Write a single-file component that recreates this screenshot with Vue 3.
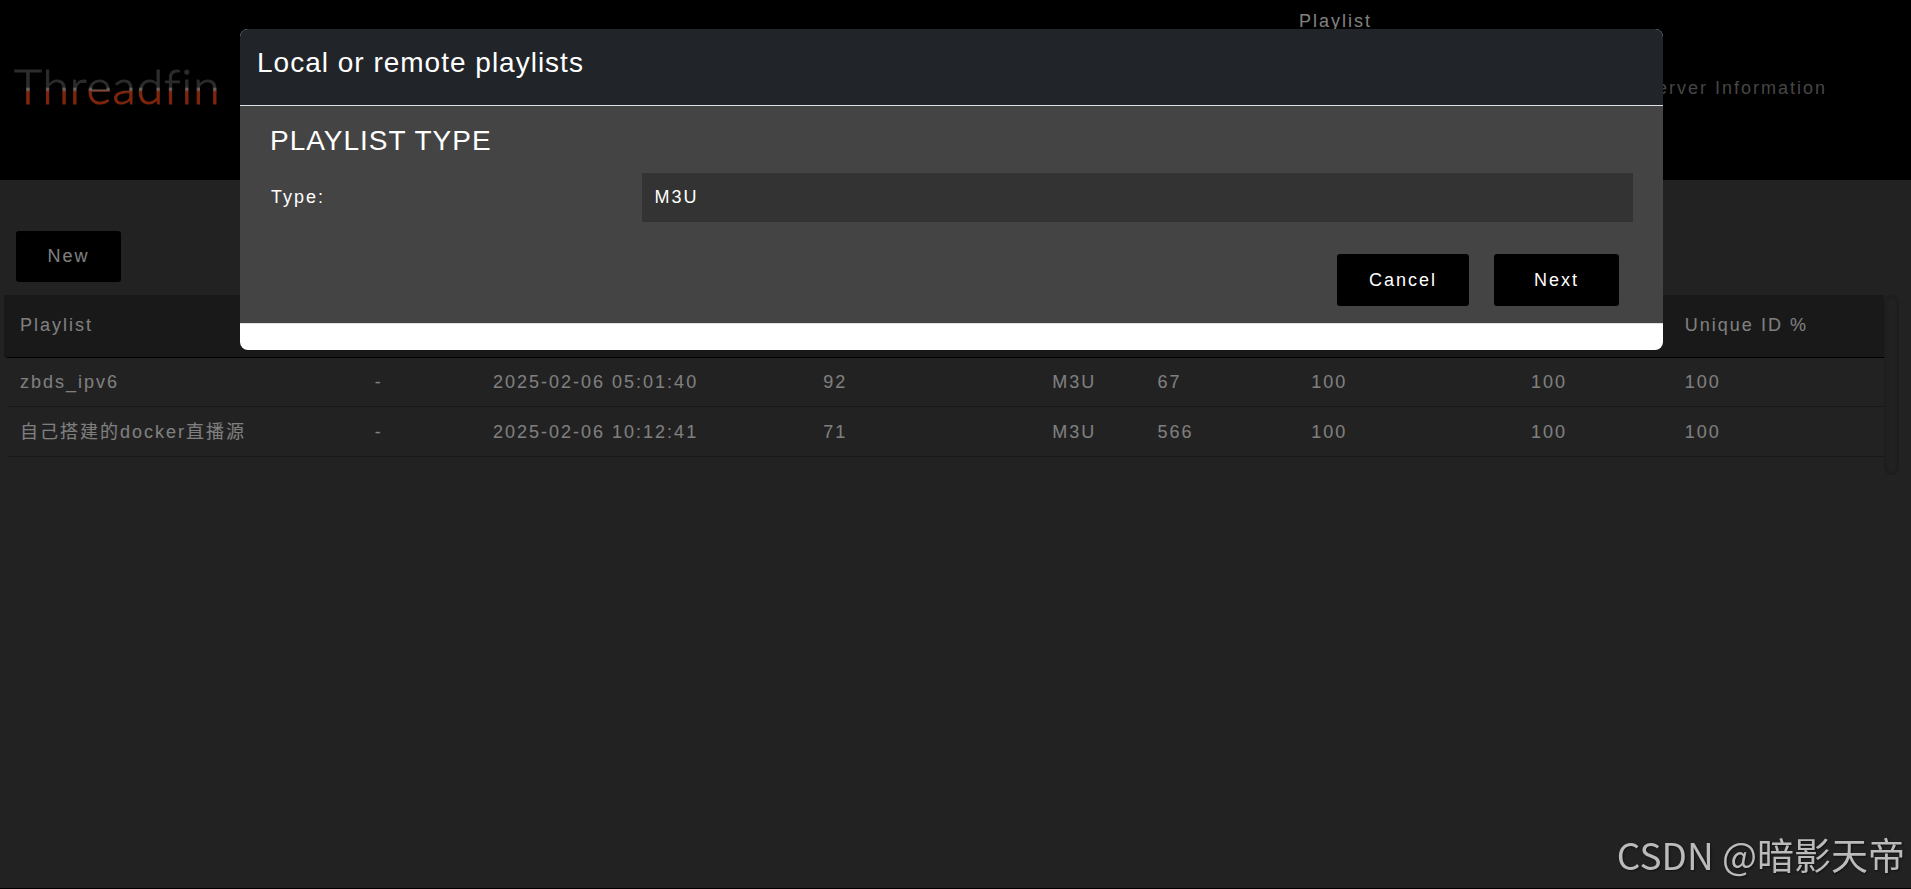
<script setup>
import { ref } from 'vue'

const playlistType = ref('M3U')

const columns = [
  { key: 'name', label: 'Playlist' },
  { key: 'tuner', label: 'Tuner' },
  { key: 'updated', label: 'Last Update' },
  { key: 'availability', label: 'Availability %' },
  { key: 'type', label: 'Type' },
  { key: 'streams', label: 'Streams' },
  { key: 'group', label: 'Group Title %' },
  { key: 'tvg', label: 'tvg-id %' },
  { key: 'unique', label: 'Unique ID %' },
]

const playlists = [
  { name: 'zbds_ipv6', tuner: '-', updated: '2025-02-06 05:01:40', availability: 92, type: 'M3U', streams: 67, group: 100, tvg: 100, unique: 100 },
  { name: '自己搭建的docker直播源', tuner: '-', updated: '2025-02-06 10:12:41', availability: 71, type: 'M3U', streams: 566, group: 100, tvg: 100, unique: 100 },
]
</script>

<template>
  <div class="page">
    <header class="topbar">
      <div class="logo">Threadfin</div>
      <nav class="nav">
        <a class="nav-link active" href="#playlist">Playlist</a>
        <a class="nav-link info" href="#server">Server Information</a>
      </nav>
    </header>

    <main class="content">
      <div class="toolbar">
        <button class="btn new" type="button">New</button>
      </div>
      <div class="table-area">
        <table class="list">
          <colgroup>
            <col v-for="c in columns" :key="c.key" :class="'col-' + c.key" />
          </colgroup>
          <thead>
            <tr>
              <th v-for="c in columns" :key="c.key" scope="col">{{ c.label }}</th>
            </tr>
          </thead>
          <tbody>
            <tr v-for="p in playlists" :key="p.name">
              <td v-for="c in columns" :key="c.key">{{ p[c.key] }}</td>
            </tr>
          </tbody>
        </table>
        <div class="track"></div>
      </div>
    </main>

    <div class="backdrop">
      <section class="modal" role="dialog" aria-labelledby="modal-title">
        <div class="modal-header">
          <h3 id="modal-title">Local or remote playlists</h3>
        </div>
        <form class="modal-body" @submit.prevent>
          <h4>Playlist type</h4>
          <div class="field">
            <label for="type">Type:</label>
            <select id="type" v-model="playlistType">
              <option value="M3U">M3U</option>
            </select>
          </div>
          <div class="actions">
            <button class="btn cancel" type="button">Cancel</button>
            <button class="btn next" type="submit">Next</button>
          </div>
        </form>
        <div class="modal-footer"></div>
      </section>
    </div>

    <div class="watermark">CSDN @暗影天帝</div>
  </div>
</template>

<style>
body {
  background: #222;
}
</style>

<style scoped>
.page {
  box-sizing: border-box;
  min-height: 100vh;
  border-bottom: 1px solid #000;
  background: #444;
  color: #fff;
  font-family: "Liberation Sans", Arial, "Noto Sans CJK SC", sans-serif;
  font-size: 18px;
  line-height: 26px;
  letter-spacing: 2px;
}

.topbar {
  display: flex;
  justify-content: space-between;
  box-sizing: border-box;
  height: 180px;
  padding: 8px 84px 0 14px;
  background: #000;
}

.logo {
  align-self: center;
  padding-bottom: 16px;
  font-family: Lato, sans-serif;
  font-size: 48px;
  font-weight: 300;
  line-height: 60px;
  letter-spacing: 1px;
  color: transparent;
  -webkit-text-stroke: 1px transparent;
  background: linear-gradient(#585858 31px, #e0e0e0 33px, #ff4a18 36px);
  background-clip: text;
  -webkit-background-clip: text;
}

.nav {
  display: flex;
  align-items: flex-start;
  justify-content: space-between;
  width: 528px;
}

.nav-link {
  color: #fff;
  text-decoration: none;
}

.nav-link.info {
  padding-top: 67px;
  color: #8c8c8c;
}

.toolbar {
  padding: 51px 16px 13px;
}

.btn {
  box-sizing: border-box;
  height: 52px;
  padding: 0;
  border: 0;
  border-radius: 3px;
  background: #000;
  color: #fff;
  font: inherit;
  letter-spacing: inherit;
}

.btn.new {
  display: block;
  width: 105px;
  height: 51px;
  padding-bottom: 2px;
}

.table-area {
  display: flex;
  padding: 0 12px 0 7px;
}

.list {
  flex: 1;
  align-self: flex-start;
  table-layout: fixed;
  border-collapse: separate;
  border-spacing: 0;
}

.col-name { width: 18.9%; }
.col-tuner { width: 6.3%; }
.col-updated { width: 17.6%; }
.col-availability { width: 12.2%; }
.col-type { width: 5.6%; }
.col-streams { width: 8.2%; }
.col-group { width: 11.7%; }
.col-tvg { width: 8.2%; }
.col-unique { width: 11.3%; }

th,
td {
  box-sizing: border-box;
  padding: 0 13px;
  text-align: left;
  font-weight: 400;
  white-space: nowrap;
}

th {
  height: 63px;
  padding-bottom: 3px;
  border-bottom: 1px solid #000;
  background: #323232;
}

th:first-child {
  box-shadow: -3px 0 0 #323232;
}

td {
  height: 50px;
  border-bottom: 1px solid #323232;
}

tbody tr:first-child td {
  height: 49px;
  padding-bottom: 1px;
}

.track {
  width: 15px;
  height: 180px;
  border-radius: 8px;
  box-shadow: inset 0 0 6px rgba(0, 0, 0, 0.3);
}

.backdrop {
  position: fixed;
  inset: 0;
  padding: 29px 248px 0 240px;
  background: rgba(0, 0, 0, 0.5);
}

.modal {
  overflow: hidden;
  border-radius: 8px;
  background: #fff;
}

.modal-header {
  padding: 17px 17px 25px;
  border-bottom: 1px solid #dee2e6;
  background: #212529;
}

h3,
h4 {
  margin: 0;
  font-size: 28px;
  font-weight: 400;
  line-height: 34px;
  letter-spacing: 1px;
}

h4 {
  padding: 0 14px;
  text-transform: uppercase;
}

.modal-body {
  padding: 18px 30px 17px 16px;
  background: #444;
}

.field {
  display: grid;
  grid-template-columns: 28fr 72fr;
  align-items: center;
  margin-top: 15px;
}

.field label {
  padding: 0 0 2px 15px;
}

select {
  appearance: none;
  width: 100%;
  height: 49px;
  padding: 0 13px 2px;
  border: 0;
  border-radius: 0;
  background: #333;
  color: #fff;
  font: inherit;
  letter-spacing: inherit;
}

.actions {
  display: flex;
  justify-content: flex-end;
  gap: 25px;
  margin: 32px 14px 0 0;
}

.cancel {
  width: 132px;
}

.next {
  width: 125px;
}

.modal-footer {
  height: 26px;
  border-top: 1px solid #dee2e6;
}

.watermark {
  position: fixed;
  right: 6px;
  bottom: 8px;
  font-family: "Noto Sans CJK SC", sans-serif;
  font-size: 37px;
  font-weight: 400;
  line-height: 54px;
  letter-spacing: 0;
  color: #bbb;
  text-shadow: 1px 1px 2px #111;
}
</style>
